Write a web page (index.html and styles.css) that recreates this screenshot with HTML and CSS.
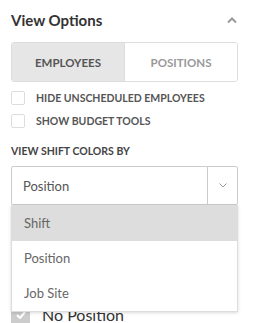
FILE: index.html
```html
<!DOCTYPE html>
<html lang="en">
<head>
    <meta charset="UTF-8">
    <title>View Options</title>
    <link rel="stylesheet" href="styles.css">
</head>
<body>
    <div class="panel">
        <div class="panel-header">
            <h2>View Options</h2>
            <svg class="collapse" width="10" height="6" viewBox="0 0 10 6"><path d="M1 5.5 L5 1.5 L9 5.5" fill="none" stroke="#999" stroke-width="2"/></svg>
        </div>
        <div class="segmented">
            <button class="seg active">EMPLOYEES</button>
            <button class="seg">POSITIONS</button>
        </div>
        <label class="check"><span class="box"></span>HIDE UNSCHEDULED EMPLOYEES</label>
        <label class="check"><span class="box"></span>SHOW BUDGET TOOLS</label>
        <div class="field-label">VIEW SHIFT COLORS BY</div>
        <div class="select-wrap">
            <div class="select">
                <span class="value">Position</span>
                <span class="arrow"><svg width="8" height="5" viewBox="0 0 8 5"><path d="M0.5 0.5 L4 4 L7.5 0.5" fill="none" stroke="#999" stroke-width="1"/></svg></span>
            </div>
            <ul class="menu">
                <li class="selected">Shift</li>
                <li>Position</li>
                <li>Job Site</li>
            </ul>
        </div>
        <div class="filter-row">
            <span class="box checked"><svg width="10" height="8" viewBox="0 0 10 8"><path d="M1 4 L4 7 L9 1" fill="none" stroke="#fff" stroke-width="2"/></svg></span>
            <span>No Position</span>
        </div>
    </div>
</body>
</html>
```

FILE: styles.css
```css
body {
    margin: 0;
    font-family: Lato, "Liberation Sans", sans-serif;
    background-color: #fff;
    color: #333;
}
.panel {
    padding: 10px 15px 0 11px;
}
.panel-header {
    display: flex;
    justify-content: space-between;
    align-items: center;
    height: 20px;
}
h2 {
    margin: 0;
    font-size: 15px;
    font-weight: bold;
    color: #333;
}
.collapse {
    margin-right: 1px;
}
.segmented {
    display: flex;
    margin-top: 12px;
    height: 38px;
    border: 1px solid #ddd;
    border-radius: 3px;
    overflow: hidden;
}
.seg {
    flex: 1;
    border: none;
    background-color: #fff;
    font-family: inherit;
    font-size: 11.5px;
    font-weight: bold;
    color: #999;
}
.seg.active {
    background-color: #e6e6e6;
    color: #555;
    border-right: 1px solid #ddd;
}
.check {
    display: flex;
    align-items: center;
    gap: 11px;
    margin-top: 9px;
    height: 14px;
    font-size: 10.5px;
    font-weight: bold;
    color: #555;
}
.check + .check {
    margin-top: 9px;
}
.box {
    width: 12px;
    height: 12px;
    border: 1px solid #ddd;
    border-radius: 2px;
    flex: 0 0 auto;
}
.field-label {
    margin-top: 17px;
    font-size: 10.5px;
    font-weight: bold;
    color: #444;
}
.select-wrap {
    position: relative;
    margin-top: 9px;
}
.select {
    display: flex;
    height: 37px;
    border: 1px solid #ccc;
    border-radius: 2px;
}
.value {
    flex: 1;
    display: flex;
    align-items: center;
    padding-left: 11px;
    font-size: 13px;
    color: #555;
}
.arrow {
    width: 29px;
    display: flex;
    align-items: center;
    justify-content: center;
    border-left: 1px solid #ccc;
}
.menu {
    position: absolute;
    top: 39px;
    left: 0;
    right: 0;
    margin: 0;
    padding: 0;
    list-style: none;
    background-color: #fff;
    border: 1px solid #ddd;
    box-shadow: 0 1px 3px rgba(0,0,0,0.15);
    z-index: 2;
}
.menu li {
    height: 35px;
    line-height: 35px;
    padding-left: 12px;
    font-size: 13px;
    color: #666;
}
.menu li.selected {
    background-color: #ddd;
}
.filter-row {
    display: flex;
    align-items: center;
    gap: 12px;
    margin-top: 100px;
    font-size: 16px;
    color: #333;
}
.box.checked {
    width: 19px;
    height: 19px;
    border: none;
    border-radius: 0;
    background-color: #ccc;
    display: flex;
    align-items: center;
    justify-content: center;
}
```
